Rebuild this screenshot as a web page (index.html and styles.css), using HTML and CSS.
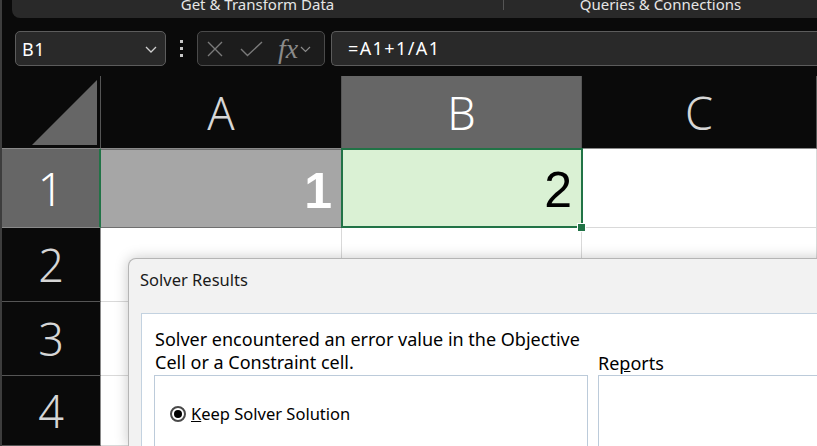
FILE: index.html
```html
<!DOCTYPE html>
<html lang="en">
<head>
  <meta charset="UTF-8">
  <title>Solver Results</title>
  <link rel="stylesheet" href="styles.css">
</head>
<body>
  <div class="window">
    <div class="ribbon">
      <div class="ribbon-group first">Get &amp; Transform Data</div>
      <div class="ribbon-divider"></div>
      <div class="ribbon-group second">Queries &amp; Connections</div>
    </div>

    <div class="formula-bar">
      <div class="name-box">
        <span>B1</span>
        <svg width="14" height="14" viewBox="0 0 14 14"><polyline points="2,5 7,10 12,5" fill="none" stroke="#cfcfcf" stroke-width="1.3"/></svg>
      </div>
      <div class="grip"><i></i><i></i><i></i></div>
      <div class="fx-buttons">
        <svg class="btn-cancel" width="18" height="18" viewBox="0 0 18 18"><path d="M2 2 L16 16 M16 2 L2 16" stroke="#7a7a7a" stroke-width="1.4"/></svg>
        <svg class="btn-enter" width="23" height="18" viewBox="0 0 23 18"><polyline points="1,9 7.5,15.5 22,2" fill="none" stroke="#7a7a7a" stroke-width="1.4"/></svg>
        <span class="fx">fx</span>
        <svg width="11" height="10" viewBox="0 0 11 10"><polyline points="1,3 5.5,7.5 10,3" fill="none" stroke="#8a8a8a" stroke-width="1.2"/></svg>
      </div>
      <div class="formula-input">=A1+1/A1</div>
    </div>

    <div class="sheet">
      <div class="corner"><div class="corner-tri"></div></div>
      <div class="col-head">A</div>
      <div class="col-head active">B</div>
      <div class="col-head">C</div>

      <div class="row-head active">1</div>
      <div class="cell grey">1</div>
      <div class="cell selected">2</div>
      <div class="cell"></div>

      <div class="row-head">2</div>
      <div class="cell"></div>
      <div class="cell"></div>
      <div class="cell"></div>

      <div class="row-head">3</div>
      <div class="cell"></div>
      <div class="cell"></div>
      <div class="cell"></div>

      <div class="row-head">4</div>
      <div class="cell"></div>
      <div class="cell"></div>
      <div class="cell"></div>
    </div>
  </div>

  <div class="dialog">
    <div class="dialog-title">Solver Results</div>
    <div class="dialog-body">
      <div class="message">Solver encountered an error value in the Objective<br>Cell or a Constraint cell.</div>
      <div class="reports-label">Re<u>p</u>orts</div>
      <div class="group-box">
        <label class="radio"><span class="radio-dot"></span><span><u>K</u>eep Solver Solution</span></label>
      </div>
      <div class="reports-box"></div>
    </div>
  </div>
</body>
</html>
```

FILE: styles.css
```css
body {
  margin: 0;
  width: 817px;
  height: 446px;
  overflow: hidden;
  background-color: #0a0a0a;
  font-family: "Noto Sans", sans-serif;
  position: relative;
}

.window {
  border-left: 2px solid #3d3d3d;
  height: 446px;
  box-sizing: border-box;
  overflow: hidden;
}

/* ribbon group labels */
.ribbon {
  display: flex;
  margin-left: 10px;
  height: 18px;
  background-color: #292929;
  border-radius: 0 0 0 8px;
  color: #e6e6e6;
  font-size: 15px;
  line-height: 8px;
  overflow: hidden;
}

.ribbon-group {
  text-align: center;
}

.ribbon-group.first {
  width: 505px;
}

.ribbon-group.second {
  width: 322px;
}

.ribbon-divider {
  width: 1px;
  height: 10px;
  background-color: #555;
}

/* formula bar */
.formula-bar {
  display: flex;
  align-items: center;
  height: 35px;
  margin-top: 13px;
  margin-bottom: 10px;
  padding-left: 13px;
}

.name-box {
  display: flex;
  align-items: center;
  justify-content: space-between;
  width: 151px;
  height: 35px;
  box-sizing: border-box;
  padding: 0 7px 0 6px;
  background-color: #292929;
  border: 1px solid #5c5c5c;
  border-radius: 5px;
  color: #fff;
  font-size: 18px;
  letter-spacing: 0.5px;
}

.grip {
  display: flex;
  flex-direction: column;
  gap: 4px;
  margin: 0 14px 0 14px;
}

.grip i {
  display: block;
  width: 3px;
  height: 3px;
  background-color: #c8c8c8;
}

.fx-buttons {
  display: flex;
  align-items: center;
  width: 128px;
  height: 35px;
  box-sizing: border-box;
  padding-left: 8px;
  border: 1px solid #4a4a4a;
  border-radius: 5px;
  background-color: #1c1c1c;
}

.btn-enter {
  margin-left: 16px;
}

.fx {
  font-family: "Liberation Serif", serif;
  font-style: italic;
  font-size: 28px;
  color: #8a8a8a;
  margin-left: 15px;
  margin-right: 2px;
  line-height: 1;
}

.formula-input {
  flex: 1;
  height: 35px;
  box-sizing: border-box;
  margin-left: 6px;
  padding-left: 16px;
  background-color: #292929;
  border: 1px solid #5c5c5c;
  border-right: none;
  border-radius: 5px 0 0 5px;
  color: #fff;
  font-size: 18px;
  letter-spacing: 1.4px;
  line-height: 33px;
}

/* sheet grid */
.sheet {
  display: grid;
  grid-template-columns: 99px 241px 240px 235px;
  grid-template-rows: 73px 79px 74px 74px 70px;
}

.corner,
.col-head,
.row-head,
.cell {
  box-sizing: border-box;
  border-right: 1px solid #d9d9d9;
  border-bottom: 1px solid #d9d9d9;
}

.corner {
  position: relative;
  border-right-color: #555;
  border-bottom-color: #8a8a8a;
}

.corner-tri {
  position: absolute;
  right: 3px;
  bottom: 3px;
  width: 65px;
  height: 65px;
  background-color: #666;
  clip-path: polygon(100% 0, 100% 100%, 0 100%);
}

.col-head {
  display: flex;
  align-items: center;
  justify-content: center;
  background-color: #0a0a0a;
  border-right-color: #555;
  border-bottom-color: #8a8a8a;
  color: #d6d6d6;
  font-size: 45px;
  font-weight: 300;
}

.col-head.active {
  background-color: #666;
  color: #fff;
}

.row-head {
  display: flex;
  align-items: center;
  justify-content: center;
  background-color: #0a0a0a;
  border-right-color: #8a8a8a;
  border-bottom-color: #555;
  color: #d6d6d6;
  font-size: 45px;
  font-weight: 300;
}

.row-head.active {
  background-color: #666;
  color: #fff;
  border-right: 2px solid #217346;
  border-bottom-color: #8a8a8a;
}

.cell {
  display: flex;
  align-items: center;
  justify-content: flex-end;
  padding: 4px 9px 0 0;
  background-color: #fff;
  font-family: "Liberation Sans", Arial, sans-serif;
  font-size: 50px;
}

.cell.grey {
  background-color: #a6a6a6;
  border-top: 1px solid #6f6f6f;
  border-bottom-color: #6f6f6f;
  color: #fff;
  font-weight: bold;
}

.cell.selected {
  position: relative;
  background-color: #daf1d4;
  color: #000;
}

.cell.selected::after {
  content: "";
  position: absolute;
  top: -1px;
  left: -1px;
  right: -2px;
  bottom: -1px;
  border: 2px solid #217346;
}

.cell.selected::before {
  content: "";
  position: absolute;
  right: -5px;
  bottom: -5px;
  width: 7px;
  height: 7px;
  background-color: #217346;
  border: 1px solid #fff;
  z-index: 1;
}

/* dialog */
.dialog {
  position: absolute;
  left: 128px;
  top: 258px;
  width: 720px;
  height: 188px;
  box-sizing: border-box;
  background-color: #f2f2f2;
  border: 1px solid #b5b5b5;
  border-bottom: none;
  border-radius: 8px 0 0 0;
  box-shadow: 0 0 14px rgba(0, 0, 0, 0.22);
  font-family: "Noto Sans", sans-serif;
  color: #000;
  overflow: hidden;
}

.dialog-title {
  height: 54px;
  padding: 9px 0 0 11px;
  box-sizing: border-box;
  font-size: 16.5px;
  color: #1a1a1a;
}

.dialog-body {
  display: grid;
  grid-template-columns: 434px 1fr;
  grid-template-rows: auto 1fr;
  column-gap: 10px;
  margin-left: 12px;
  padding: 14px 0 0 12px;
  height: 140px;
  box-sizing: border-box;
  background-color: #fff;
  border-top: 1px solid #c3d2e0;
  border-left: 1px solid #c3d2e0;
}

.message {
  font-size: 18px;
  line-height: 23px;
  padding-left: 1px;
  margin-bottom: 1px;
  white-space: nowrap;
}

.reports-label {
  align-self: end;
  font-size: 18px;
  line-height: 23px;
}

.group-box,
.reports-box {
  border: 1px solid #bccbda;
  border-bottom: none;
}

.group-box {
  padding: 26px 0 0 15px;
  box-sizing: border-box;
}

.reports-box {
  border-right: none;
}

.radio {
  display: flex;
  align-items: center;
  gap: 5px;
  font-size: 16.5px;
}

.radio-dot {
  position: relative;
  width: 16px;
  height: 16px;
  box-sizing: border-box;
  border: 2px solid #4a4a4a;
  border-radius: 50%;
  background-color: #fff;
}

.radio-dot::after {
  content: "";
  position: absolute;
  left: 2px;
  top: 2px;
  width: 8px;
  height: 8px;
  border-radius: 50%;
  background-color: #000;
}
```
